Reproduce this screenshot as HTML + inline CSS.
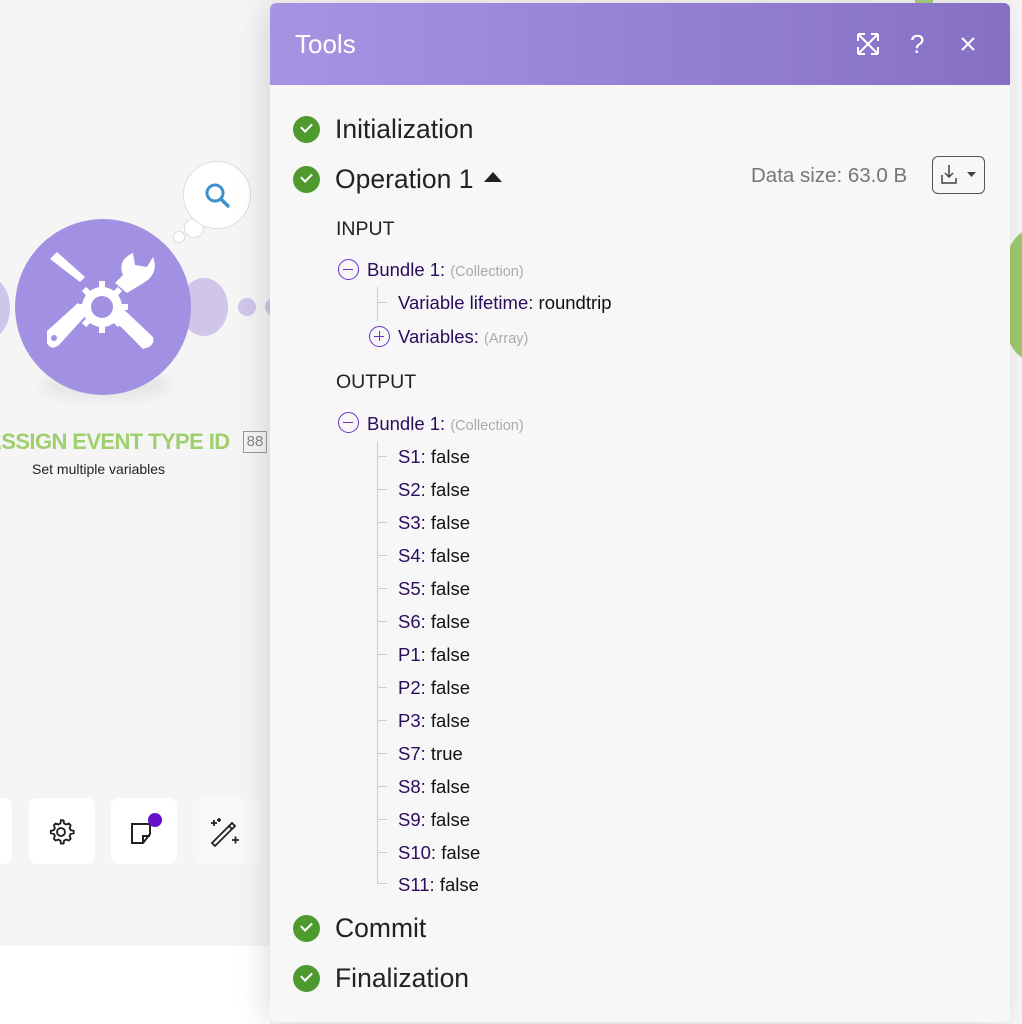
<!DOCTYPE html>
<html><head><style>
*{margin:0;padding:0;box-sizing:border-box}
body{width:1022px;height:1024px;overflow:hidden;background:#f5f5f5;font-family:"Liberation Sans",sans-serif;position:relative}
.a{position:absolute}
.panel{left:270px;top:3px;width:740px;height:1019px;background:#f7f7f7;border-radius:6px;box-shadow:-6px 0 30px rgba(0,0,0,.12);overflow:hidden}
.hdr{left:0;top:0;width:740px;height:82px;background:linear-gradient(90deg,#a694e3,#8670c4)}
.chk{width:27px;height:27px;border-radius:50%;background:#4f9a2f}
.chk:after{content:"";position:absolute;left:8px;top:7px;width:9px;height:5px;border-left:2.5px solid #fff;border-bottom:2.5px solid #fff;transform:rotate(-45deg)}
.big{font-size:26.5px;color:#222}
.sec{font-size:19.5px;color:#222}
.k{font-size:18.5px;color:#2a0b5c;white-space:nowrap}
.k b{font-weight:normal;color:#111}
.k i{font-style:normal;font-size:14.5px;color:#aaa}
.tog{width:21px;height:21px;border:1.5px solid #6b2fd0;border-radius:50%}
.tog:before{content:"";position:absolute;left:4px;top:8.5px;width:10px;height:1.5px;background:#6b2fd0}
.tog.p:after{content:"";position:absolute;left:8.5px;top:4px;width:1.5px;height:10px;background:#6b2fd0}
.vl{width:1px;background:#ccc}
.hl{height:1px;width:10px;background:#ccc}
.btn{width:66px;height:66px;background:#fff;border-radius:8px}
</style></head><body>
<div class="a" style="left:0;top:946px;width:270px;height:78px;background:#fff"></div>
<div class="a" style="left:915px;top:0;width:18px;height:4px;background:#a9cf7f"></div>
<div class="a" style="left:1000px;top:230px;width:60px;height:130px;border-radius:50%;background:#9dc86f"></div>
<div class="a" style="left:-30px;top:278px;width:40px;height:60px;border-radius:50%;background:#cfc6ea"></div>
<div class="a" style="left:180px;top:278px;width:48px;height:58px;border-radius:50%;background:#cfc6ea"></div>
<div class="a" style="left:238px;top:298px;width:18px;height:18px;border-radius:50%;background:#cfc6ea"></div>
<div class="a" style="left:265px;top:298px;width:18px;height:18px;border-radius:50%;background:#cfc6ea"></div>
<div class="a" style="left:40px;top:370px;width:130px;height:30px;border-radius:50%;background:rgba(0,0,0,.06);filter:blur(6px)"></div>
<div class="a" style="left:15px;top:219px;width:176px;height:176px;border-radius:50%;background:#a291e2"></div>
<svg class="a" style="left:45px;top:245px" width="120" height="120" viewBox="0 0 120 120">
<g fill="#fff">
<path d="M5 14 L12 7 L40 32 L35 37 Z"/>
<path d="M2 86 L33 58 L43 68 L14 100 Q6 106 2 98 Z"/>
<path d="M64 70 L74 60 L108 92 Q110 98 104 102 L98 104 Z"/>
<path d="M70 38 L78 30 Q72 15 88 8 L90 20 L102 22 L108 12 Q115 30 95 40 L82 48 Z"/>
<circle cx="57" cy="62" r="20"/>
</g>
<circle cx="9" cy="93" r="3" fill="#a291e2"/>
<g stroke="#fff" stroke-width="6"><path d="M57 36v52M31 62h52M39 44l36 36M75 44l-36 36"/></g>
<circle cx="57" cy="62" r="11" fill="#a291e2"/>
</svg>
<div class="a" style="left:173px;top:231px;width:12px;height:12px;border-radius:50%;background:#fff;border:1px solid #ddd"></div>
<div class="a" style="left:184px;top:218px;width:20px;height:20px;border-radius:50%;background:#fff;border:1px solid #ddd"></div>
<div class="a" style="left:183px;top:161px;width:68px;height:68px;border-radius:50%;background:#fff;border:1px solid #ddd"></div>
<svg class="a" style="left:202px;top:180px" width="30" height="30"><circle cx="13" cy="13" r="8" fill="none" stroke="#3e92cc" stroke-width="3"/><path d="M19 19l7 7" stroke="#3e92cc" stroke-width="3.5" stroke-linecap="round"/></svg>
<div class="a" style="left:-14px;top:429px;font-size:22px;font-weight:bold;color:#a0cf6d;white-space:nowrap;letter-spacing:-.6px">ASSIGN EVENT TYPE ID</div>
<div class="a" style="left:243px;top:431px;width:24px;height:22px;border:1px solid #999;color:#888;font-size:15px;text-align:center;line-height:20px">88</div>
<div class="a" style="left:32px;top:461px;font-size:14px;color:#222">Set multiple variables</div>
<div class="a btn" style="left:-54px;top:798px"></div>
<div class="a btn" style="left:29px;top:798px"></div>
<div class="a btn" style="left:111px;top:798px"></div>
<div class="a btn" style="left:193px;top:798px;background:#f8f8f8"></div>
<svg class="a" style="left:46px;top:817px" width="30" height="30" viewBox="0 0 24 24" fill="none" stroke="#222" stroke-width="1.5"><path d="M12 2.5l2 .3.5 2.3 1.6.9 2.2-.8 1.4 1.5-.8 2.2.9 1.6 2.3.5v2l-2.3.5-.9 1.6.8 2.2-1.4 1.5-2.2-.8-1.6.9-.5 2.3h-2l-.5-2.3-1.6-.9-2.2.8-1.4-1.5.8-2.2-.9-1.6-2.3-.5v-2l2.3-.5.9-1.6-.8-2.2 1.4-1.5 2.2.8 1.6-.9.5-2.3z"/><circle cx="12" cy="12" r="3.2"/></svg>
<svg class="a" style="left:128px;top:817px" width="32" height="32" viewBox="0 0 32 32" fill="none" stroke="#222" stroke-width="2"><path d="M4 7h18v10l-7 9H4z M15 26v-7h7"/></svg>
<div class="a" style="left:148px;top:813px;width:14px;height:14px;border-radius:50%;background:#6512c9"></div>
<svg class="a" style="left:208px;top:815px" width="34" height="34" viewBox="0 0 34 34" fill="none" stroke="#222" stroke-width="1.8"><path d="M4 28l20-20 3 3-20 20z M21 11l3 3 M3 8h6M6 5v6 M11 3v4M9 5h4 M24 25h7M27.5 21.5v7"/></svg>
<div class="a panel">
<div class="a hdr"></div>
<div class="a" style="left:25px;top:26px;font-size:26px;color:#fff">Tools</div>
<svg class="a" style="left:586px;top:29px" width="24" height="24" fill="none" stroke="#fff" stroke-width="2"><path d="M2 2h7M2 2v7M22 2h-7M22 2v7M2 22h7M2 22v-7M22 22h-7M22 22v-7M3 3l18 18M21 3L3 21"/></svg>
<div class="a" style="left:640px;top:26px;font-size:26px;color:#fff">?</div>
<svg class="a" style="left:690px;top:33px" width="16" height="16" stroke="#fff" stroke-width="2"><path d="M2 2l12 12M14 2L2 14"/></svg>
<div class="a chk" style="left:23px;top:113px"></div>
<div class="a big" style="left:65px;top:111px">Initialization</div>
<div class="a chk" style="left:23px;top:163px"></div>
<div class="a big" style="left:65px;top:161px">Operation 1</div>
<div class="a" style="left:214px;top:169px;width:0;height:0;border-left:9px solid transparent;border-right:9px solid transparent;border-bottom:10px solid #222"></div>
<div class="a" style="left:481px;top:161px;font-size:20.5px;color:#777">Data size: 63.0 B</div>
<div class="a" style="left:662px;top:153px;width:53px;height:38px;border:1.5px solid #555;border-radius:6px"></div>
<svg class="a" style="left:670px;top:160px" width="40" height="24" fill="none" stroke="#444" stroke-width="1.5"><path d="M9 2v12M5 10l4 4 4-4M2 12v8h14v-5"/><path d="M27 9h9l-4.5 5z" fill="#444" stroke="none"/></svg>
<div class="a sec" style="left:66px;top:215px">INPUT</div>
<div class="a tog" style="left:68px;top:256px"></div>
<div class="a k" style="left:97px;top:256px">Bundle 1: <i>(Collection)</i></div>
<div class="a vl" style="left:107px;top:284px;height:34px"></div>
<div class="a hl" style="left:107px;top:299px"></div>
<div class="a k" style="left:128px;top:289px">Variable lifetime: <b>roundtrip</b></div>
<div class="a tog p" style="left:99px;top:323px"></div>
<div class="a k" style="left:128px;top:323px">Variables: <i>(Array)</i></div>
<div class="a sec" style="left:66px;top:368px">OUTPUT</div>
<div class="a tog" style="left:68px;top:409px"></div>
<div class="a k" style="left:97px;top:410px">Bundle 1: <i>(Collection)</i></div>
<div class="a vl" style="left:107px;top:438px;height:443px"></div>
<div class="a" style="left:107px;top:0">
<div class="a hl" style="top:453px"></div><div class="a hl" style="top:486px"></div><div class="a hl" style="top:519px"></div><div class="a hl" style="top:552px"></div><div class="a hl" style="top:585px"></div><div class="a hl" style="top:618px"></div><div class="a hl" style="top:651px"></div><div class="a hl" style="top:684px"></div><div class="a hl" style="top:717px"></div><div class="a hl" style="top:750px"></div><div class="a hl" style="top:783px"></div><div class="a hl" style="top:816px"></div><div class="a hl" style="top:849px"></div><div class="a hl" style="top:880px"></div>
</div>
<div class="a k" style="left:128px;top:443px">S1: <b>false</b></div>
<div class="a k" style="left:128px;top:476px">S2: <b>false</b></div>
<div class="a k" style="left:128px;top:509px">S3: <b>false</b></div>
<div class="a k" style="left:128px;top:542px">S4: <b>false</b></div>
<div class="a k" style="left:128px;top:575px">S5: <b>false</b></div>
<div class="a k" style="left:128px;top:608px">S6: <b>false</b></div>
<div class="a k" style="left:128px;top:641px">P1: <b>false</b></div>
<div class="a k" style="left:128px;top:674px">P2: <b>false</b></div>
<div class="a k" style="left:128px;top:707px">P3: <b>false</b></div>
<div class="a k" style="left:128px;top:740px">S7: <b>true</b></div>
<div class="a k" style="left:128px;top:773px">S8: <b>false</b></div>
<div class="a k" style="left:128px;top:806px">S9: <b>false</b></div>
<div class="a k" style="left:128px;top:839px">S10: <b>false</b></div>
<div class="a k" style="left:128px;top:871px">S11: <b>false</b></div>
<div class="a chk" style="left:23px;top:912px"></div>
<div class="a big" style="left:65px;top:910px">Commit</div>
<div class="a chk" style="left:23px;top:962px"></div>
<div class="a big" style="left:65px;top:960px">Finalization</div>
</div>
</body></html>
